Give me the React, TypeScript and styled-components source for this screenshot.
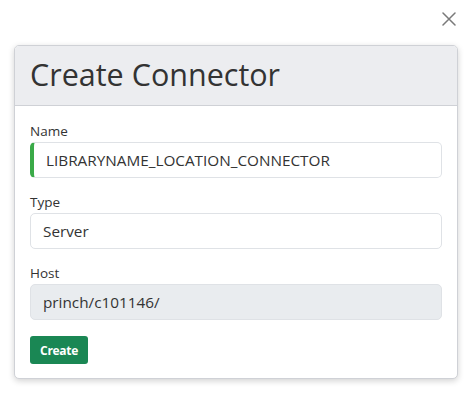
import React from "react";
import styled, { createGlobalStyle } from "styled-components";

const Global = createGlobalStyle`
  html, body { margin: 0; padding: 0; background: #ffffff; }
  body { font-family: "Open Sans", "Noto Sans", sans-serif; color: #212529; }
  * { box-sizing: border-box; }
`;

const Page = styled.div`
  width: 470px;
  height: 395px;
  display: flex;
  flex-direction: column;
`;

const TopBar = styled.div`
  height: 45px;
  display: flex;
  justify-content: flex-end;
  align-items: flex-start;
  padding: 12px 14px 0 0;
`;

const CloseButton = styled.button`
  width: 14px;
  height: 14px;
  padding: 0;
  border: none;
  background: none;
  display: flex;
  cursor: pointer;
`;

const Card = styled.div`
  margin: 0 12px 0 14px;
  border: 1px solid #cfd1d6;
  border-radius: 5px;
  background: #ffffff;
  box-shadow: 0 2px 6px rgba(0, 0, 0, 0.18);
  overflow: hidden;
`;

const Header = styled.div`
  height: 60px;
  background: #ecedf0;
  border-bottom: 1px solid #cfd1d6;
  display: flex;
  align-items: center;
  padding: 0 15px;
`;

const Title = styled.h1`
  margin: 0;
  font-size: 30.5px;
  font-weight: 400;
  color: #333333;
  line-height: 1;
  padding-bottom: 2px;
`;

const Body = styled.div`
  padding: 15px 15px 14px 15px;
  display: flex;
  flex-direction: column;
`;

const Field = styled.div`
  display: flex;
  flex-direction: column;
  margin-bottom: 14px;
`;

const Label = styled.label`
  font-size: 13.5px;
  line-height: 21px;
  color: #333333;
`;

const Input = styled.div<{ $accent?: boolean; $disabled?: boolean }>`
  height: 36px;
  display: flex;
  align-items: center;
  border: 1px solid #dfe2e6;
  border-left: ${(p) => (p.$accent ? "4px solid #3aaa48" : "1px solid #dfe2e6")};
  border-radius: 5px;
  background: ${(p) => (p.$disabled ? "#e9ecef" : "#ffffff")};
  padding-left: 12px;
  font-size: 15.3px;
  color: #333333;
`;

const Actions = styled.div`
  display: flex;
  margin-top: 2px;
`;

const Button = styled.button`
  height: 28px;
  width: 58px;
  border: none;
  border-radius: 3px;
  background: #1a8754;
  color: #ffffff;
  font-family: "Open Sans", "Noto Sans", sans-serif;
  font-weight: 700;
  font-size: 12px;
  letter-spacing: -0.3px;
  padding: 0;
`;

export default function App() {
  return (
    <>
      <Global />
      <Page>
        <TopBar>
          <CloseButton aria-label="Close">
            <svg width="14" height="14" viewBox="0 0 14 14">
              <path d="M1 1 L13 13 M13 1 L1 13" stroke="#7a7a7a" strokeWidth="1.5" strokeLinecap="round" />
            </svg>
          </CloseButton>
        </TopBar>
        <Card>
          <Header>
            <Title>Create Connector</Title>
          </Header>
          <Body>
            <Field>
              <Label>Name</Label>
              <Input $accent>LIBRARYNAME_LOCATION_CONNECTOR</Input>
            </Field>
            <Field>
              <Label>Type</Label>
              <Input>Server</Input>
            </Field>
            <Field>
              <Label>Host</Label>
              <Input $disabled>princh/c101146/</Input>
            </Field>
            <Actions>
              <Button>Create</Button>
            </Actions>
          </Body>
        </Card>
      </Page>
    </>
  );
}
